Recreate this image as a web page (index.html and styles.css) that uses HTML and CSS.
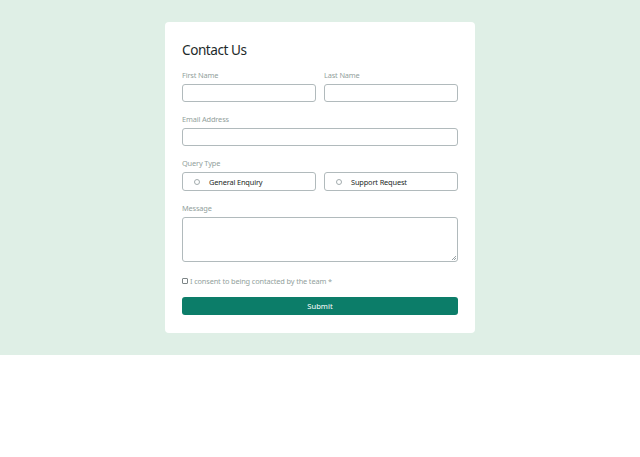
FILE: index.html
```html
<!DOCTYPE html>
<html lang="en">
<head>
<meta charset="utf-8">
<title>Contact Us</title>
<link rel="stylesheet" href="styles.css">
</head>
<body>
<main class="page">
  <form class="card">
    <h1 class="title">Contact Us</h1>
    <div class="row">
      <div class="field">
        <label class="label">First Name</label>
        <div class="input"></div>
      </div>
      <div class="field">
        <label class="label">Last Name</label>
        <div class="input"></div>
      </div>
    </div>
    <div class="field">
      <label class="label">Email Address</label>
      <div class="input"></div>
    </div>
    <div class="field">
      <label class="label">Query Type</label>
      <div class="row">
        <div class="radio"><span class="dot"></span><span>General Enquiry</span></div>
        <div class="radio"><span class="dot"></span><span>Support Request</span></div>
      </div>
    </div>
    <div class="field">
      <label class="label">Message</label>
      <div class="textarea"><span class="grip"></span></div>
    </div>
    <div class="consent"><span class="box"></span><span>I consent to being contacted by the team *</span></div>
    <div class="submit">Submit</div>
  </form>
</main>
</body>
</html>
```
FILE: styles.css
```css
* { box-sizing: border-box; }
body {
  margin: 0;
  font-family: "Noto Sans", "Open Sans", sans-serif;
  background: #ffffff;
}
.page {
  background: #dfefe6;
  padding: 22px 0;
  display: flex;
  justify-content: center;
}
.card {
  width: 310px;
  background: #ffffff;
  border-radius: 4px;
  padding: 18px 17px 18px;
  display: flex;
  flex-direction: column;
}
.title {
  margin: 0;
  font-size: 13.6px;
  line-height: 20px;
  font-weight: 400;
  letter-spacing: -0.45px;
  color: #1e2a2a;
}
.row {
  display: flex;
  gap: 8px;
}
.row > * { flex: 1; }
.field {
  display: flex;
  flex-direction: column;
}
.card > .row { margin-top: 9px; }
.card > .field { margin-top: 11px; }
.row .field { margin-top: 0; }
.label {
  font-size: 7.4px;
  line-height: 12px;
  letter-spacing: -0.15px;
  color: #939f9d;
  margin-bottom: 3px;
}
.input {
  height: 18px;
  border: 1px solid #b1babc;
  border-radius: 3px;
}
.radio {
  height: 19px;
  border: 1px solid #b1babc;
  border-radius: 3px;
  display: flex;
  align-items: center;
  padding-left: 11px;
  font-size: 7.4px;
  letter-spacing: -0.15px;
  color: #1c2928;
}
.dot {
  width: 6px;
  height: 6px;
  border: 1px solid #a3acae;
  border-radius: 50%;
  margin-right: 9px;
}
.textarea {
  height: 45px;
  border: 1px solid #b1babc;
  border-radius: 3px;
  position: relative;
}
.grip {
  position: absolute;
  right: 1px;
  bottom: 1px;
  width: 4px;
  height: 4px;
  background: linear-gradient(135deg, transparent 45%, #9aa3a6 45%, #9aa3a6 55%, transparent 55%, transparent 70%, #9aa3a6 70%, #9aa3a6 80%, transparent 80%);
}
.consent {
  margin-top: 13px;
  display: flex;
  align-items: center;
  font-size: 7.4px;
  line-height: 12px;
  letter-spacing: -0.15px;
  color: #939f9d;
}
.box {
  width: 6px;
  height: 6px;
  border: 1px solid #7d8587;
  border-radius: 1px;
  margin-right: 2px;
}
.submit {
  margin-top: 10px;
  height: 18px;
  background: #0c7d69;
  border-radius: 3px;
  color: #ffffff;
  font-size: 7.6px;
  display: flex;
  align-items: center;
  justify-content: center;
}
```
